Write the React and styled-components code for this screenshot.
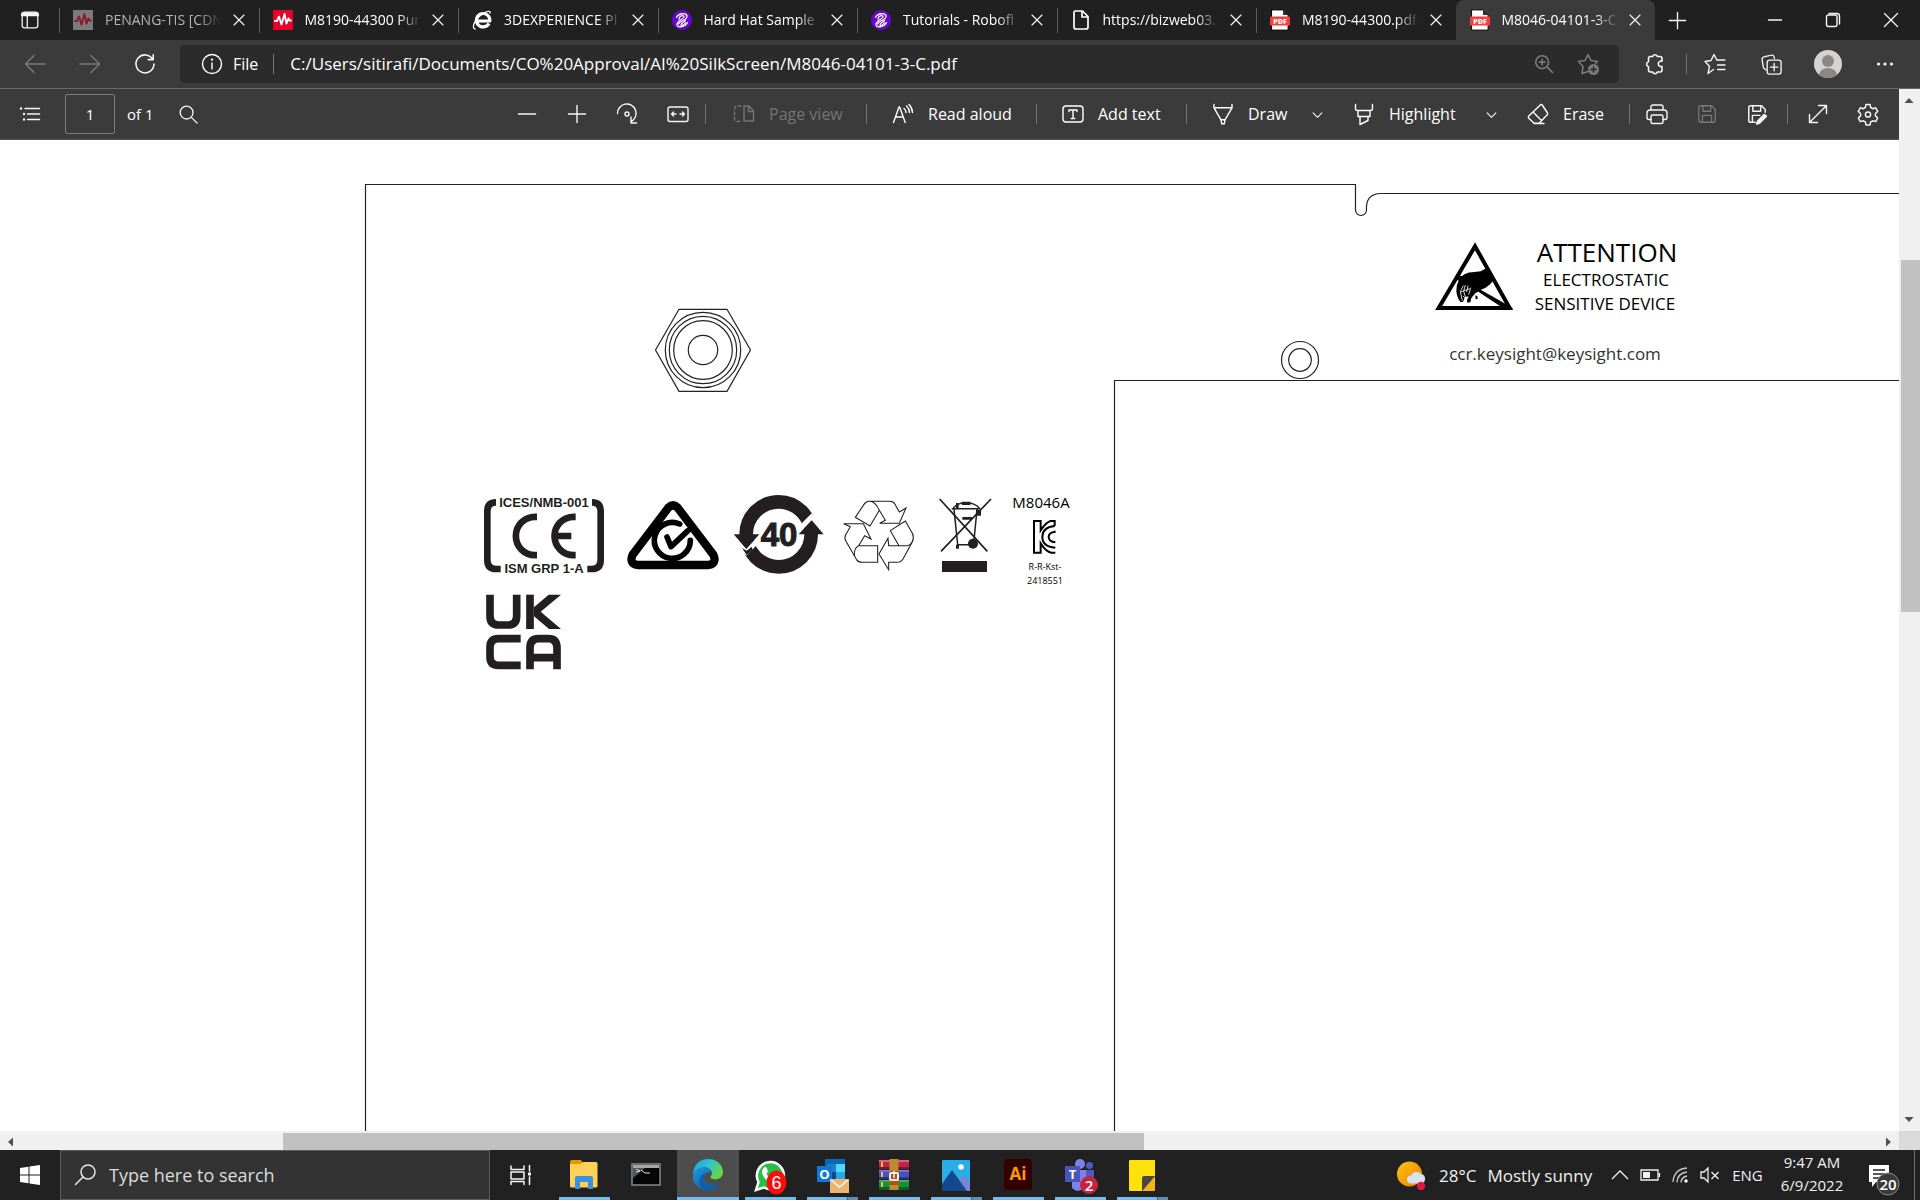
import React from "react";
import styled, { createGlobalStyle } from "styled-components";

const GlobalStyle = createGlobalStyle`
  * { box-sizing: border-box; }

  html, body, #root { height: 100%; }

  body {
    margin: 0;
    overflow: hidden;
    font-family: "Open Sans", "Noto Sans", sans-serif;
    color: #ffffff;
    background: #ffffff;
  }

  button, input {
    font: inherit;
    color: inherit;
  }
`;

/* ---------- icons ---------- */

const Glyph = styled.svg`
  display: block;
  flex: none;
  width: ${(p) => p.$size || 24}px;
  height: ${(p) => p.$size || 24}px;
  fill: none;
  stroke: currentColor;
  stroke-width: ${(p) => p.$weight || 1.4};
  stroke-linecap: round;
  stroke-linejoin: round;
  overflow: visible;
`;

const paths = {
  back: <path d="M22 12H2.500M11 3.500 2.500 12l8.500 8.500" />,
  forward: <path d="M2 12h19.500M13 3.500l8.500 8.500-8.500 8.500" />,
  reload: <path d="M20.500 7A9.800 9.800 0 1 0 21.800 12M21 2v5.200h-5.500" />,
  info: (
    <>
      <circle cx="12" cy="12" r="9.500" />
      <path d="M12 11v6" />
      <circle cx="12" cy="7.600" r=".5" fill="currentColor" />
    </>
  ),
  zoomIn: (
    <>
      <circle cx="10" cy="10" r="7" />
      <path d="m15.200 15.200 6 6M10 7v6M7 10h6" />
    </>
  ),
  starAdd: (
    <>
      <path d="M11 19.500 5 21.500l1-7L1.500 9.500l6.500-1L11 2.500l3 6 6.500 1-2 2" />
      <circle cx="16.500" cy="17.500" r="5.500" fill="currentColor" stroke="none" />
      <path d="M16.500 15v5M14 17.500h5" stroke="#2b2b2b" />
    </>
  ),
  puzzle: (
    <path d="M6.500 4.500h3.200a2.400 2.400 0 0 1 4.600 0H17a2 2 0 0 1 2 2v2.700a2.800 2.800 0 1 0 0 5.300V18a2 2 0 0 1-2 2h-2.700a2.400 2.400 0 0 1-4.600 0H7.500a2 2 0 0 1-2-2v-3.200a2.600 2.600 0 0 1 0-5V6.500a2 2 0 0 1 2-2Z" />
  ),
  starList: (
    <path d="M10.500 17.500 5 21.500l1.500-7.300L2 9.500l6-1 3-6 2.800 5.500H22M14.500 13H22M14.500 17.500H22" />
  ),
  collections: (
    <>
      <path d="M6.500 17.500 5 16.800a3 3 0 0 1-1.700-3L2.200 7a2.500 2.500 0 0 1 2-3l7.500-1.700A2.500 2.500 0 0 1 14.700 4l.3 1.500" />
      <rect x="7.500" y="7.500" width="14.500" height="14.500" rx="2.500" />
      <path d="M14.750 11v7.500M11 14.750h7.500" />
    </>
  ),
  more: (
    <g fill="currentColor" stroke="none">
      <circle cx="5.500" cy="12" r="1.600" />
      <circle cx="12" cy="12" r="1.600" />
      <circle cx="18.500" cy="12" r="1.600" />
    </g>
  ),
  contents: (
    <>
      <path d="M7 6.500h14.500M9.500 12h12M9.500 17.500h12" />
      <g fill="currentColor" stroke="none">
        <circle cx="3" cy="6.500" r="1.200" />
        <circle cx="6" cy="12" r="1.200" />
        <circle cx="6" cy="17.500" r="1.200" />
      </g>
    </>
  ),
  search: (
    <>
      <circle cx="10" cy="10" r="6.700" />
      <path d="m15 15 6 6" />
    </>
  ),
  minus: <path d="M3.500 12h17" />,
  plus: <path d="M3.500 12h17M12 3.500v17" />,
  rotate: (
    <>
      <path d="M2.500 11.500a9.300 9.300 0 1 1 14 7.800M16 15v6h5.500" />
      <circle cx="12" cy="12" r="2" />
    </>
  ),
  fit: (
    <>
      <rect x="2" y="5" width="20" height="14.500" rx="2" />
      <path d="M5.500 12h4.500M14 12h4.500M7.500 10l-2 2 2 2M16.500 10l2 2-2 2" />
    </>
  ),
  pageView: (
    <>
      <path d="M12 4h5l4.500 5v10h-9.500zM16.500 4v5.500h5" />
      <path d="M9 4H5a2.500 2.500 0 0 0-2.500 2.500V17A2.500 2.500 0 0 0 5 19.500h4" strokeDasharray="3 2.500" />
    </>
  ),
  readAloud: (
    <path d="M2.500 20.500 8 5h.6l5.600 15.500M4.500 15h7.800M13 6.500a5 5 0 0 1 2 4M15.500 4a9 9 0 0 1 3 6.500M18 2.500a12 12 0 0 1 3.500 8" />
  ),
  addText: (
    <>
      <rect x="2" y="4" width="20" height="16" rx="3" />
      <path d="M8 9.500V8h8v1.500M12 8v8.500M10.300 16.500h3.400" />
    </>
  ),
  pen: (
    <path d="M3 2.500v3.300M21 2.500v3.300M3 5.800h18l-7 12h-4zM10 17.800l.7 4h2.600l.7-4" />
  ),
  marker: (
    <path d="M3.500 2.500v4a2 2 0 0 0 2 2h13a2 2 0 0 0 2-2v-4M6 8.500v6h12v-6M8 14.500v8l8-4v-4" />
  ),
  erase: (
    <path d="M14.500 2.800 2.800 14a1.500 1.500 0 0 0 0 2.200l5.400 5h5l8-8.500a1.500 1.500 0 0 0 0-2.200l-5-7.500a1.200 1.200 0 0 0-1.700-.2ZM7 10l8.500 8.500M8 21.500h10" />
  ),
  chevron: <path d="m6.500 10 5.500 5.500 5.500-5.500" />,
  print: (
    <>
      <path d="M6 8V5a2 2 0 0 1 2-2h8a2 2 0 0 1 2 2v3M6 17.500H4A2 2 0 0 1 2 15.500V11a3 3 0 0 1 3-3h14a3 3 0 0 1 3 3v4.500a2 2 0 0 1-2 2h-2" />
      <rect x="6" y="13" width="12" height="8.500" rx="1.500" />
    </>
  ),
  save: (
    <path d="M5 3h12l4 4v12a2 2 0 0 1-2 2H5a2 2 0 0 1-2-2V5a2 2 0 0 1 2-2ZM7.500 3v6h8.500V3M7 21v-7.500h10V21" />
  ),
  saveAs: (
    <>
      <path d="M10 21H5a2 2 0 0 1-2-2V5a2 2 0 0 1 2-2h12l4 4v3M7.500 3v6h8.500V3M7 21v-7.500h8" />
      <path d="m20 13-7 7-1 2.500 2.700-1L21.800 14.500z" strokeWidth="2.500" />
    </>
  ),
  expand: <path d="M3.500 20.500 20.500 3.500M12.500 3.500h8v8M3.500 12.500v8h8" />,
  gear: (
    <>
      <path d="m10 2.500-.7 3a7 7 0 0 0-2 1.200l-3-.9-2 3.600 2.300 2.100a7 7 0 0 0 0 2.400l-2.300 2.100 2 3.600 3-.9a7 7 0 0 0 2 1.200l.7 3h4l.7-3a7 7 0 0 0 2-1.200l3 .9 2-3.600-2.300-2.100a7 7 0 0 0 0-2.400l2.300-2.100-2-3.600-3 .9a7 7 0 0 0-2-1.200l-.7-3z" />
      <circle cx="12" cy="12.500" r="2.600" />
    </>
  ),
  close: <path d="m6 6 12 12M18 6 6 18" />,
  minimize: <path d="M5.500 12h13" />,
  restore: (
    <>
      <rect x="5.500" y="7" width="10.500" height="11.500" rx="2" />
      <path d="M8 5.500h8a2.500 2.500 0 0 1 2.500 2.500v8" />
    </>
  ),
  tabMenu: (
    <>
      <rect x="3.500" y="3.500" width="17" height="17" rx="2.500" />
      <path d="M3.500 6.500h17M4 5h16" strokeWidth="3" />
      <path d="M9 8v12" />
    </>
  ),
};

const Icon = ({ name, size, weight }) => (
  <Glyph viewBox="0 0 24 24" $size={size} $weight={weight} aria-hidden="true">
    {paths[name]}
  </Glyph>
);

/* ---------- tab strip ---------- */

const Shell = styled.div`
  height: 100vh;
  display: flex;
  flex-direction: column;
  overflow: hidden;
`;

const TabStrip = styled.div`
  display: flex;
  flex: none;
  height: 40px;
  background: #202020;
`;

const IconButton = styled.button`
  display: flex;
  align-items: center;
  justify-content: center;
  flex: none;
  width: ${(p) => p.$width || 50}px;
  padding: 0;
  border: none;
  background: transparent;
  color: ${(p) => (p.$dim ? "#7a7a7a" : "#f5f5f5")};
`;

const Tabs = styled.div`
  display: flex;
  flex: 1;
  min-width: 0;
`;

const Tab = styled.div`
  display: flex;
  align-items: center;
  flex: 1;
  min-width: 0;
  padding: 0 12px 0 14px;
  border-radius: 8px 8px 0 0;
  background: ${(p) => (p.$active ? "#3b3b3b" : `linear-gradient(#5c5c5c, #5c5c5c) 0 8px / 1px 25px no-repeat`)};
`;

const TabTitle = styled.span`
  flex: 1;
  margin: 0 9px 0 12px;
  overflow: hidden;
  white-space: nowrap;
  font-size: 14px;
  line-height: 20px;
  color: ${(p) => (p.$dim ? "#b4b4b4" : "#ffffff")};
  mask-image: linear-gradient(to right, #000 80%, transparent);
`;

const TabSpacer = styled.div`
  width: 47px;
  flex: none;
`;

const Favicon = ({ kind }) => (
  <Glyph viewBox="0 0 20 20" $size={20} aria-hidden="true">
    {(kind === "wave" || kind === "waveDim") && (
      <>
        <rect width="20" height="20" stroke="none" fill={kind === "wave" ? "#e90029" : "#7b7b7b"} />
        <path
          d="M2 11h2l2-4.500 2.500 8L11.500 4l2 9.500 2-5 1 2H18"
          stroke={kind === "wave" ? "#ffffff" : "#8a1a2c"}
          strokeWidth="1.900"
        />
      </>
    )}
    {kind === "ie" && (
      <>
        <path d="M6 11h11.800A6.700 6.700 0 1 0 17 13.500" stroke="#ffffff" strokeWidth="3.200" strokeLinecap="butt" />
        <path d="M3 19C-1 18 3 9 9.500 4.500M18 3c1-2-2-2-5-.5" stroke="#ffffff" strokeWidth="1.300" />
      </>
    )}
    {kind === "roboflow" && (
      <>
        <circle cx="10" cy="10" r="10" fill="#6706ce" stroke="none" />
        <path
          d="M4.500 7.500C6 3.500 14 2 15 6c.8 4-7.500 4.500-8.500 8M7 9c0-3 4.500-4.500 5-2.500.5 2.500-8 4-7 8.500 1 3 8.500 2 10.500-2.500M13.500 10.500c-3 2-5.500 4-4 5 1.500.5 3-1.500 4-3"
          stroke="#ffffff"
          strokeWidth="1.300"
        />
      </>
    )}
    {kind === "file" && (
      <path d="M4.500 1h7l5.500 5.500V17a2 2 0 0 1-2 2H5a2 2 0 0 1-2-2V2.500A1.500 1.500 0 0 1 4.500 1ZM11 1v6h6" stroke="#ffffff" strokeWidth="1.700" />
    )}
    {kind === "pdf" && (
      <>
        <path d="M2 0h11l5 5v15H2z" fill="#ffffff" stroke="#000000" strokeWidth=".8" />
        <path d="M13 0v5h5z" fill="#333333" stroke="none" />
        <rect x="0" y="6.500" width="20" height="9" rx="1" fill="#f93f3f" stroke="none" />
        <text x="10" y="13.500" textAnchor="middle" fontSize="7" fontWeight="800" fill="#ffffff" stroke="none">
          PDF
        </text>
      </>
    )}
  </Glyph>
);

const tabs = [
  { id: 1, icon: "waveDim", title: "PENANG-TIS [CDN", dim: true },
  { id: 2, icon: "wave", title: "M8190-44300 Pur" },
  { id: 3, icon: "ie", title: "3DEXPERIENCE Pl" },
  { id: 4, icon: "roboflow", title: "Hard Hat Sample" },
  { id: 5, icon: "roboflow", title: "Tutorials - Robofl" },
  { id: 6, icon: "file", title: "https://bizweb03." },
  { id: 7, icon: "pdf", title: "M8190-44300.pdf" },
  { id: 8, icon: "pdf", title: "M8046-04101-3-C", active: true },
];

/* ---------- address bar ---------- */

const AddressRow = styled.div`
  display: flex;
  flex: none;
  height: 49px;
  padding: 0 7px;
  background: #3b3b3b;
  border-bottom: 1px solid #686868;
`;

const AddressBox = styled.div`
  display: flex;
  align-items: center;
  flex: 1;
  min-width: 0;
  margin: 5px 5px 5px 8px;
  padding: 0 8px 0 20px;
  border-radius: 5px;
  background: #2b2b2b;
`;

const Scheme = styled.span`
  margin-left: 9px;
  font-size: 16px;
`;

const Divider = styled.span`
  flex: none;
  align-self: center;
  width: 1px;
  height: 20px;
  margin: 0 ${(p) => p.$gap || 0}px;
  background: #757575;
`;

const AddressInput = styled.input`
  flex: 1;
  min-width: 0;
  padding: 0 0 2px 1px;
  border: none;
  outline: none;
  background: transparent;
  font-size: 17px;
`;

const Avatar = styled.svg`
  width: 28px;
  height: 28px;
`;

/* ---------- pdf viewer ---------- */

const Viewer = styled.main`
  display: flex;
  flex: 1;
  min-height: 0;
`;

const ViewerColumn = styled.div`
  display: flex;
  flex-direction: column;
  flex: 1;
  min-width: 0;
`;

const PdfBar = styled.div`
  display: flex;
  flex: none;
  height: 51px;
  padding-right: 6px;
  background: #3b3b3b;
  border-bottom: 1px solid #555555;
  font-size: 16px;
`;

const PageInput = styled.input`
  align-self: center;
  width: 50px;
  height: 40px;
  margin: 0 12px 0 5px;
  padding: 0;
  border: 1px solid #7d7d7d;
  border-radius: 2px;
  background: transparent;
  text-align: center;
  font-size: 15px;
`;

const PageCount = styled.span`
  align-self: center;
  width: 36px;
  font-size: 15px;
`;

const ToolGroup = styled.div`
  display: flex;
  margin-left: auto;
`;

const ToolButton = styled.button`
  display: flex;
  align-items: center;
  gap: 13px;
  flex: none;
  width: ${(p) => p.$width}px;
  padding: 0 0 0 ${(p) => (p.$tight ? 15 : 24)}px;
  border: none;
  background: transparent;
  white-space: nowrap;
  color: ${(p) => (p.$dim ? "#747474" : "#ffffff")};
`;

const Sheet = styled.svg`
  display: block;
  flex: 1;
  min-height: 0;
  width: 100%;
  background: #ffffff;
  fill: none;
  stroke: none;
`;

const Track = styled.div`
  display: flex;
  flex: none;
  flex-direction: ${(p) => (p.$vertical ? "column" : "row")};
  ${(p) => (p.$vertical ? "width: 21px; padding-left: 2px;" : "height: 19px; padding-top: 2px;")}
  background: #f0f0f0;
`;

const TrackGap = styled.div`
  flex: ${(p) => p.$grow} 0 0;
`;

const Thumb = styled.div`
  flex: ${(p) => p.$grow} 0 0;
  background: #c1c1c1;
`;

const Arrow = styled.svg`
  display: block;
  flex: none;
  width: 20px;
  height: 20px;
  fill: #505050;
`;

const Corner = styled.div`
  height: 19px;
  flex: none;
  margin-left: -2px;
  background: #dadada;
`;

const ink = "#231f20";

const PlateOutline = () => (
  <g stroke="#222222" strokeWidth="1.200">
    <path d="M365.500 2400V44.500H1355.500V70a5.500 5.500 0 0 0 11 0V66q1-12 14-12.500H3800" />
    <path d="M1114.500 2400V240.500H3800" />
    <circle cx="1300" cy="220" r="18.500" />
    <circle cx="1300" cy="220" r="11.300" />
    <path d="M655.500 210 679 169.300h48L750.500 210 727 251.300h-48z" />
    <circle cx="703" cy="210" r="37.700" />
    <circle cx="703" cy="210" r="33.700" />
    <circle cx="703" cy="210" r="29.300" />
    <circle cx="703" cy="210" r="14.700" />
  </g>
);

const EsdWarning = () => (
  <g>
    <g transform="translate(1260 30) scale(.33333)">
      <path d="M645 229 536 414H749Z" stroke="#000000" strokeWidth="12" />
      <path
        fill="#000000"
        d="M590 313 606 319Q617 308 636 307L662 304 684 292 704 325 692 341Q678 355 662 359L757 413V420H738L655 365Q646 366 642 374L634 384 631 397 622 398 621 390 626 379 615 381 609 396 602 396Q590 382 589 362 588 345 596 332L584 325ZM646 376 652 379 653 387 647 388Z"
      />
      <path stroke="#ffffff" strokeWidth="2.500" d="M610 347 601 365 607 392M616 345 611 364 616 380M624 347 620 366M632 353 626 374M603 366 629 356M609 378 616 384" />
    </g>
    <g fill="#000000" textAnchor="middle" fontFamily='"Open Sans", sans-serif'>
      <text x="1607" y="122" fontSize="26">ATTENTION</text>
      <text x="1606" y="146" fontSize="17">ELECTROSTATIC</text>
      <text x="1605" y="170" fontSize="17">SENSITIVE DEVICE</text>
      <text x="1555" y="220" fontSize="17" fill="#333333">ccr.keysight@keysight.com</text>
    </g>
  </g>
);

const CeMark = () => (
  <g>
    <g transform="translate(470 340) scale(.33333)" stroke={ink} strokeWidth="20">
      <path d="M78 67Q52 67 52 94V240Q52 267 78 267H92M366 67Q392 67 392 94V240Q392 267 366 267H352" />
      <path d="M201 110.500H195a57.500 57.500 0 0 0 0 115H201M317 110.500H311a57.500 57.500 0 0 0 0 115H317M262 168H304" />
    </g>
    <g fill={ink} textAnchor="middle" fontFamily='"Liberation Sans", Arial, sans-serif' fontSize="13" fontWeight="700">
      <text x="544" y="367">ICES/NMB-001</text>
      <text x="544" y="433">ISM GRP 1-A</text>
    </g>
  </g>
);

const RcmMark = () => (
  <g transform="translate(470 340) scale(.33333)" stroke="#000000" strokeLinecap="round">
    <path d="M596 82Q609 70 622 82L730 224Q742 250 715 255H503Q476 250 488 224Z" strokeWidth="25" />
    <path d="M629 132A54 54 0 1 0 661 181" strokeWidth="17" />
    <path d="M591 171 603 200 654 152" strokeWidth="17" strokeLinejoin="round" />
  </g>
);

const FortyMark = () => (
  <g>
    <g transform="translate(470 340) scale(.33333)">
      <circle cx="926" cy="163" r="97.500" stroke={ink} strokeWidth="41" />
      <path d="M785 169 829 216 878 166" stroke="#ffffff" strokeWidth="16" />
      <path d="M1067 157 1025 111 976 160" stroke="#ffffff" strokeWidth="16" />
      <path d="M816 204 830 212 845 200 848 210 830 225Z" fill={ink} />
      <path d="M791 163H868L829 207Z" fill={ink} />
      <path d="M1061 163H986L1025 121Z" fill={ink} />
    </g>
    <text
      x="779"
      y="406"
      textAnchor="middle"
      fill={ink}
      stroke={ink}
      strokeWidth="1"
      fontFamily='"Liberation Sans", Arial, sans-serif'
      fontSize="33"
      fontWeight="700"
    >
      40
    </text>
  </g>
);

const RecycleMark = () => (
  <g transform="translate(800 340) scale(.33333)" stroke={ink} strokeWidth="3.200">
    <path d="M166 112 192 73Q198 64 208 64H270Q280 64 285 73L298 96 318 84 298 130H239L256 121 238 91 210 138ZM212 64Q228 68 238 91" />
    <path d="M271 152 316 123 337 160Q343 172 338 184L309 237Q303 247 292 247H266V269L237 222 264 175 266 197H297ZM297 197H322Q336 195 340 174" />
    <path d="M233 197V247H186Q175 247 169 238L138 184Q132 173 137 164L151 140 131 131H190L213 177 194 167 176 197ZM176 197Q160 205 164 228" />
  </g>
);

const WeeeMark = () => (
  <g transform="translate(800 340) scale(.33333)" stroke={ink} strokeWidth="5">
    <path d="M419 57 562 214M573 57 423 214" />
    <path d="M462 88 473 194H512M531 88 522 180M455 86H541M460 84Q472 68 498 68T538 84" strokeWidth="4.500" />
    <g fill={ink} stroke="none">
      <path d="M486 65H511V75H486zM528 90H543V107H528zM487 111H516V119H487zM468 194H477V206H468zM468 69H476V86H468z" />
      <circle cx="519" cy="191" r="15" />
      <path d="M426 243H561V276H426z" />
    </g>
  </g>
);

const KcMark = () => (
  <g>
    <g transform="translate(800 340) scale(.33333)" stroke="#000000" strokeWidth="6">
      <path d="M764 138V123H752Q740 125 722 151V123H702V218H722V190Q738 216 754 218H766" />
      <path d="M764 138Q727 142 727 171T766 203" />
      <path d="M766 155Q746 157 746 171T766 187M764 152V158" />
    </g>
    <g fill="#000000" textAnchor="middle" fontFamily='"Open Sans", sans-serif'>
      <text x="1041" y="368" fontSize="15">M8046A</text>
      <g fontSize="9">
        <text x="1045" y="430">R-R-Kst-</text>
        <text x="1045" y="444">2418551</text>
      </g>
    </g>
  </g>
);

const UkcaMark = () => (
  <g transform="translate(470 340) scale(.33333)" stroke={ink} strokeWidth="23">
    <path d="M60 344V408Q60 435 86 435H114Q140 435 140 408V344" />
    <path d="M180 344V447" />
    <path d="M192 382 236 344H273L212 395 273 447H237L192 409Z" fill={ink} stroke="none" />
    <path d="M152 476H86Q60 476 60 502V530Q60 556 86 556H152" />
    <path d="M180 568V504Q180 476 206 476H235Q261 476 261 504V568M180 533H261" />
  </g>
);

/* ---------- taskbar ---------- */

const Taskbar = styled.footer`
  display: flex;
  flex: none;
  height: 50px;
  background: #212121;
`;

const SearchBox = styled.label`
  display: flex;
  align-items: center;
  flex: none;
  width: 430px;
  padding-left: 13px;
  border: 1px solid #5c5c5c;
  background: #333333;
  color: #e6e6e6;

  input {
    flex: 1;
    min-width: 0;
    padding: 0;
    margin-left: 11px;
    border: none;
    outline: none;
    background: transparent;
    font-size: 18px;
  }

  input::placeholder {
    color: #dcdcdc;
    opacity: 1;
  }
`;

const AppButton = styled.button`
  display: flex;
  align-items: center;
  justify-content: center;
  flex: none;
  width: 62px;
  padding: 0;
  border: none;
  background-color: ${(p) => (p.$focused ? "#4d4d4d" : "transparent")};
  background-image: ${(p) => {
    if (!p.$running) return "none";
    return p.$stacked
      ? "linear-gradient(to right, #76b9ed 40px, #41617b 40px, #41617b 41px, #5c8fb8 41px)"
      : "linear-gradient(#76b9ed, #76b9ed)";
  }};
  background-repeat: no-repeat;
  background-position: center bottom;
  background-size: ${(p) => (p.$focused ? 62 : 51)}px 3px;
`;

const AppArt = styled.svg`
  display: block;
  width: 34px;
  height: 34px;
  overflow: visible;
`;

const Tray = styled.div`
  display: flex;
  align-items: center;
  margin-left: auto;
  color: #f0f0f0;
`;

const Weather = styled.button`
  display: flex;
  align-items: center;
  gap: 11px;
  width: 211px;
  padding: 0;
  border: none;
  background: transparent;
  font-size: 17px;
  white-space: nowrap;
`;

const TrayIcon = styled.svg`
  display: block;
  flex: none;
  width: 30px;
  height: 24px;
  fill: none;
  stroke: #f0f0f0;
  stroke-width: 1.300;
`;

const Language = styled.span`
  width: 45px;
  text-align: center;
  font-size: 15px;
`;

const Clock = styled.div`
  width: 80px;
  padding: 0 0 2px 4px;
  text-align: center;
  font-size: 15px;
  line-height: 23px;
`;

const Notices = styled.svg`
  display: block;
  width: 60px;
  height: 50px;
  margin-left: 4px;
`;

const ShowDesktop = styled.div`
  width: 6px;
  height: 50px;
  border-left: 1px solid #6d6d6d;
`;

const appArt = {
  explorer: (
    <>
      <path d="M3 4a2 2 0 0 1 2-2h9l2 3v8H3z" fill="#e09a00" />
      <path d="M3 6h11l2-2h13a1.500 1.500 0 0 1 1.500 1.500V28A1.500 1.500 0 0 1 29 29.500H4.500A1.500 1.500 0 0 1 3 28z" fill="#ffd257" />
      <path d="M8 31V20a2 2 0 0 1 2-2h14a2 2 0 0 1 2 2v11h-5v-7h-8v7z" fill="#3a92dc" />
    </>
  ),
  terminal: (
    <>
      <rect x="3" y="6" width="28" height="21" fill="#050505" stroke="#85898f" strokeWidth="1.500" />
      <path d="M4 7h26v3H4z" fill="#a6a6a6" />
      <path d="M4 10h12L4 20z" fill="#555555" />
      <path d="m7 11 4 2-4 1M12 12l4 3h5" stroke="#dddddd" fill="none" />
    </>
  ),
  edge: (
    <>
      <defs>
        <linearGradient id="edgeTop" x1="0" x2="1" y1="0" y2=".5">
          <stop offset="0" stopColor="#1fa0e0" />
          <stop offset=".5" stopColor="#2cc3d2" />
          <stop offset="1" stopColor="#65d846" />
        </linearGradient>
        <linearGradient id="edgeBody" x1="0" x2="1" y1="0" y2="1">
          <stop offset="0" stopColor="#1b9de2" />
          <stop offset="1" stopColor="#114a8b" />
        </linearGradient>
      </defs>
      <path d="M2 16C3 6 9 1 17 1c9 0 15 6 15 13 0 6-5 8-10 7-3-.5-3-2-2-3 3-4-1-8-6-8C8 10 4 12 2 16Z" fill="url(#edgeTop)" />
      <path d="M2 17c1-5 6-8 11-8 4 0 7 2 7 6-3-2-8 1-7 6 1 6 9 8 16 4-3 6-9 8-14 7C7 31 1 25 2 17Z" fill="url(#edgeBody)" />
      <path d="M13 20c-1 9 9 12 16 5-3 6-9 8-14 7-5-1-9-8-5-14 1-2 4-3 6-2-2 1-3 2-3 4Z" fill="#0f5fae" />
    </>
  ),
  whatsapp: (
    <>
      <path d="M3 32 5.500 24A13.500 13.500 0 1 1 11 29.500Z" fill="#25c045" stroke="#ffffff" strokeWidth="2.500" />
      <path d="M11 9.500c1-1 3-.5 3 1l1 3-1.500 2c1 3 3 5 6 6l2-2 3 1.500c1 1 0 4-3 4.500-6 0-13-7-12.500-12 0-2 1-3 2-4Z" fill="#ffffff" />
      <ellipse cx="23.500" cy="24.500" rx="10" ry="12" fill="#fb0d0d" />
      <text x="23.500" y="31" textAnchor="middle" fontFamily="Liberation Sans" fontSize="18" fill="#ffffff">6</text>
    </>
  ),
  outlook: (
    <>
      <path d="M10 1h20v22H10z" fill="#1066b5" />
      <path d="M12 6h9v8h-9z" fill="#1a80cf" />
      <path d="M21 6h9v8h-9z" fill="#50d9ff" />
      <path d="M12 14h9v8h-9z" fill="#0a4a8b" />
      <path d="M21 14h9v8h-9z" fill="#28a8ea" />
      <path d="M2 8h15v16H2z" fill="#0f78d4" />
      <text x="9.500" y="21" textAnchor="middle" fontSize="13" fontWeight="700" fill="#ffffff">O</text>
      <path d="M15 21h19v14H15z" fill="#eeb371" />
      <path d="m16 22 8.500 7 8.500-7" fill="none" stroke="#ffffff" strokeWidth="1.500" />
    </>
  ),
  archive: (
    <>
      <path d="M2 2h30v9H2z" fill="#c32344" />
      <path d="M2 12h30v9H2z" fill="#4b4fc4" />
      <path d="M2 22h30v10H2z" fill="#16913a" />
      <path d="M2 2h30v2H2zM2 12h30v1.500H2zM2 22h30v1.500H2z" fill="#ffffff" opacity=".3" />
      <path d="M2 9h30v2H2zM2 19h30v2H2zM2 29h30v3H2z" fill="#000000" opacity=".35" />
      <path d="M4 4h2v5H4zM4 14h2v5H4zM4 24h2v5H4z" fill="#e6c35b" />
      <path d="M12.500 1h9v31h-9z" fill="#bd8a33" />
      <path d="M12.500 13h9v14h-9z" fill="#a8550f" />
      <rect x="13" y="15" width="8" height="7" rx="1" fill="none" stroke="#eeeeee" strokeWidth="2" />
      <path d="M17 13v7" stroke="#eeeeee" strokeWidth="1.500" />
    </>
  ),
  photos: (
    <>
      <rect x="3" y="2" width="28" height="31" rx="1" fill="#29aeea" />
      <path d="m17 24 8-7 6 7v9H17z" fill="#7986d8" />
      <path d="M3 26 13 12l15 21H3z" fill="#134a8e" />
      <circle cx="22" cy="9" r="2.800" fill="#ffffff" />
    </>
  ),
  illustrator: (
    <>
      <rect x="3" y="1" width="28" height="31" rx="4" fill="#330000" />
      <text x="17" y="22" textAnchor="middle" fontSize="17" fontWeight="700" fill="#ff9a00">Ai</text>
    </>
  ),
  teams: (
    <>
      <circle cx="17" cy="6" r="5" fill="#7b83eb" />
      <circle cx="26.500" cy="7.500" r="3.500" fill="#5059c9" />
      <path d="M21 12h10v10a6 6 0 0 1-10 4z" fill="#5059c9" />
      <path d="M9 12h14v12a8 8 0 0 1-14 6z" fill="#7b83eb" />
      <path d="M2 8h15v16H2z" fill="#4b53bc" />
      <text x="9.500" y="21" textAnchor="middle" fontSize="13" fontWeight="700" fill="#ffffff">T</text>
      <circle cx="26" cy="27" r="9" fill="#c4253b" />
      <text x="26" y="33" textAnchor="middle" fontSize="15" fontWeight="600" fill="#ffffff">2</text>
    </>
  ),
  notes: (
    <>
      <path d="M4 3a1 1 0 0 1 1-1h25v16L17 33H5a1 1 0 0 1-1-1z" fill="#ffe20c" />
      <path d="M17 33 30 18v14a1 1 0 0 1-1 1z" fill="#f0b51c" />
      <path d="M17 33V20a2 2 0 0 1 2-2h11z" fill="#474747" />
    </>
  ),
};

const apps = [
  { id: "explorer", label: "File Explorer", running: true },
  { id: "terminal", label: "Command Prompt" },
  { id: "edge", label: "Microsoft Edge", running: true, focused: true },
  { id: "whatsapp", label: "WhatsApp", running: true },
  { id: "outlook", label: "Outlook", running: true, stacked: true },
  { id: "archive", label: "WinRAR", running: true },
  { id: "photos", label: "Photos", running: true, stacked: true },
  { id: "illustrator", label: "Illustrator", running: true },
  { id: "teams", label: "Teams", running: true },
  { id: "notes", label: "Sticky Notes", running: true, stacked: true },
];

const BrowserTabs = () => (
  <TabStrip>
    <IconButton $width={59} aria-label="Tab actions"><Icon name="tabMenu" size={22} /></IconButton>
    <Tabs>
      {tabs.map((tab) => (
        <Tab key={tab.id} $active={tab.active}>
          <Favicon kind={tab.icon} />
          <TabTitle $dim={tab.dim}>{tab.title}</TabTitle>
          <IconButton $width={16} aria-label="Close tab"><Icon name="close" size={20} /></IconButton>
        </Tab>
      ))}
    </Tabs>
    <IconButton $width={44} aria-label="New tab"><Icon name="plus" size={23} /></IconButton>
    <TabSpacer />
    <IconButton $width={58} aria-label="Minimize"><Icon name="minimize" /></IconButton>
    <IconButton $width={57} aria-label="Restore"><Icon name="restore" /></IconButton>
    <IconButton $width={59} aria-label="Close"><Icon name="close" size={26} weight={1.2} /></IconButton>
  </TabStrip>
);

const AddressBar = () => (
  <AddressRow>
    <IconButton $width={55} $dim aria-label="Back"><Icon name="back" /></IconButton>
    <IconButton $width={55} $dim aria-label="Forward"><Icon name="forward" /></IconButton>
    <IconButton $width={55} aria-label="Refresh"><Icon name="reload" size={22} weight={1.7} /></IconButton>
    <AddressBox>
      <Icon name="info" />
      <Scheme>File</Scheme>
      <Divider $gap={15} />
      <AddressInput
        aria-label="Address"
        defaultValue="C:/Users/sitirafi/Documents/CO%20Approval/AI%20SilkScreen/M8046-04101-3-C.pdf"
      />
      <IconButton $width={45} $dim aria-label="Zoom"><Icon name="zoomIn" size={22} weight={1.8} /></IconButton>
      <IconButton $width={45} $dim aria-label="Add to favorites"><Icon name="starAdd" weight={1.6} /></IconButton>
    </AddressBox>
    <IconButton $width={62} aria-label="Extensions"><Icon name="puzzle" weight={1.6} /></IconButton>
    <Divider />
    <IconButton $width={56} aria-label="Favorites"><Icon name="starList" /></IconButton>
    <IconButton $width={56} aria-label="Collections"><Icon name="collections" size={23} /></IconButton>
    <IconButton $width={58} aria-label="Profile">
      <Avatar viewBox="0 0 28 28" aria-hidden="true">
        <clipPath id="face"><circle cx="14" cy="14" r="14" /></clipPath>
        <g clipPath="url(#face)">
          <rect width="28" height="28" fill="#d5d2cf" />
          <circle cx="14" cy="11" r="6" fill="#8c8784" />
          <ellipse cx="14" cy="25" rx="9" ry="7" fill="#8c8784" />
        </g>
      </Avatar>
    </IconButton>
    <IconButton $width={56} aria-label="Settings and more"><Icon name="more" /></IconButton>
  </AddressRow>
);

const PdfToolbar = () => (
  <PdfBar>
    <IconButton $width={60} aria-label="Table of contents"><Icon name="contents" /></IconButton>
    <PageInput aria-label="Page number" defaultValue="1" />
    <PageCount>of 1</PageCount>
    <IconButton aria-label="Search"><Icon name="search" size={23} /></IconButton>
    <ToolGroup>
      <IconButton aria-label="Zoom out"><Icon name="minus" /></IconButton>
      <IconButton aria-label="Zoom in"><Icon name="plus" /></IconButton>
      <IconButton aria-label="Rotate"><Icon name="rotate" /></IconButton>
      <IconButton $width={51} aria-label="Fit to width"><Icon name="fit" /></IconButton>
      <Divider $gap={2} />
      <ToolButton $width={158} $dim><Icon name="pageView" />Page view</ToolButton>
      <Divider />
      <ToolButton $width={169}><Icon name="readAloud" />Read aloud</ToolButton>
      <Divider />
      <ToolButton $width={149}><Icon name="addText" />Add text</ToolButton>
      <Divider />
      <ToolButton $width={110}><Icon name="pen" />Draw</ToolButton>
      <IconButton $width={40} aria-label="Draw options"><Icon name="chevron" size={19} /></IconButton>
      <ToolButton $width={134} $tight><Icon name="marker" />Highlight</ToolButton>
      <IconButton $width={40} aria-label="Highlight options"><Icon name="chevron" size={19} /></IconButton>
      <ToolButton $width={116} $tight><Icon name="erase" />Erase</ToolButton>
      <Divider $gap={2} />
      <IconButton aria-label="Print"><Icon name="print" /></IconButton>
      <IconButton $dim aria-label="Save"><Icon name="save" size={22} /></IconButton>
      <IconButton aria-label="Save as"><Icon name="saveAs" size={22} weight={1.6} /></IconButton>
      <Divider $gap={5} />
      <IconButton aria-label="Full screen"><Icon name="expand" /></IconButton>
      <IconButton aria-label="Settings"><Icon name="gear" weight={1.5} /></IconButton>
    </ToolGroup>
  </PdfBar>
);

const Drawing = () => (
  <Sheet role="img" aria-label="Silk screen drawing">
    <PlateOutline />
    <EsdWarning />
    <CeMark />
    <RcmMark />
    <FortyMark />
    <RecycleMark />
    <WeeeMark />
    <KcMark />
    <UkcaMark />
  </Sheet>
);

const SystemTray = () => (
  <Tray>
    <Weather>
      <AppArt viewBox="0 0 34 34" aria-hidden="true">
        <defs>
          <linearGradient id="sun" x1="0" x2="1" y1="0" y2="1">
            <stop offset="0" stopColor="#fdc60b" />
            <stop offset="1" stopColor="#f07c0a" />
          </linearGradient>
        </defs>
        <circle cx="15.500" cy="16" r="12.500" fill="url(#sun)" />
        <path d="M17 25.500a4 4 0 0 1 0-8 6 6 0 0 1 10-1.500 4.800 4.800 0 0 1 0 9.500z" fill="#d4e2f4" />
        <circle cx="27" cy="28" r="4.200" fill="#e2183d" />
      </AppArt>
      <span>28°C</span>
      <span>Mostly sunny</span>
    </Weather>
    <TrayIcon viewBox="0 0 30 24" aria-label="Show hidden icons"><path d="m7 16 8-8 8 8" /></TrayIcon>
    <TrayIcon viewBox="0 0 30 24" aria-label="Battery">
      <path d="M6 7h17v10H6zM24.500 10v4" />
      <path d="M8 9h7v6H8z" fill="#f0f0f0" stroke="none" />
    </TrayIcon>
    <TrayIcon viewBox="0 0 30 24" aria-label="Network">
      <path d="M8 19Q9 6 22 5M12 19.500Q12.500 10 22 9M16 19.500Q16.500 14 22 13" opacity=".8" />
      <circle cx="21" cy="18" r="1.800" fill="#f0f0f0" stroke="none" />
    </TrayIcon>
    <TrayIcon viewBox="0 0 30 24" aria-label="Muted"><path d="M6 9h3l4-4v14l-4-4H6zM16.500 9l7 7M23.500 9l-7 7" /></TrayIcon>
    <Language>ENG</Language>
    <Clock>
      <div>9:47 AM</div>
      <div>6/9/2022</div>
    </Clock>
    <Notices viewBox="0 0 60 50" aria-label="Notifications">
      <path d="M15 15h20v17H22l-4 5v-5h-3z" fill="#ffffff" />
      <path d="M19 20h12M19 24h12M19 28h7" stroke="#212121" strokeWidth="1.300" />
      <circle cx="34" cy="34" r="11" fill="#3a3a3a" stroke="#8a8a8a" />
      <text x="34" y="40" textAnchor="middle" fontSize="15" fontWeight="600" fill="#ffffff">20</text>
    </Notices>
    <ShowDesktop />
  </Tray>
);

export default function App() {
  return (
    <>
      <GlobalStyle />
      <Shell>
        <BrowserTabs />
        <AddressBar />
        <Viewer>
          <ViewerColumn>
            <PdfToolbar />
            <Drawing />
            <Track>
              <Arrow viewBox="0 0 20 20"><path d="M13 4.500v9L8 9z" /></Arrow>
              <TrackGap $grow={263} />
              <Thumb $grow={861} />
              <TrackGap $grow={735} />
              <Arrow viewBox="0 0 20 20"><path d="M7 4.500v9L12 9z" /></Arrow>
            </Track>
          </ViewerColumn>
          <Track $vertical>
            <Arrow viewBox="0 0 20 20"><path d="M3.500 14h9L8 9z" /></Arrow>
            <TrackGap $grow={151} />
            <Thumb $grow={352} />
            <TrackGap $grow={499} />
            <Arrow viewBox="0 0 20 20"><path d="M3.500 6h9L8 11z" /></Arrow>
            <Corner />
          </Track>
        </Viewer>
        <Taskbar>
          <IconButton $width={60} aria-label="Start">
            <Glyph viewBox="0 0 20 20" $size={20}>
              <path d="M0 3 8.500 1.700V9.500H0zM9.500 1.500 20 0v9.500H9.500zM0 10.500h8.500v7.800L0 17zM9.500 10.500H20V20L9.500 18.500z" fill="#ffffff" stroke="none" />
            </Glyph>
          </IconButton>
          <SearchBox>
            <Glyph viewBox="0 0 24 24" $weight={1.5}>
              <circle cx="14" cy="9" r="7" />
              <path d="m9 14-7.500 7.500" />
            </Glyph>
            <input type="text" placeholder="Type here to search" aria-label="Search" />
          </SearchBox>
          <IconButton $width={63} aria-label="Task view">
            <Glyph viewBox="0 0 24 24" $weight={1.5}>
              <path d="M1 3v3.500h13V3M1 9h13v7H1zM1 21.500V18.500h13v3M19.500 2.500V8M19.500 14v7.500" />
              <path d="M18 9.500h3v3h-3z" fill="currentColor" stroke="none" />
            </Glyph>
          </IconButton>
          {apps.map((app) => (
            <AppButton key={app.id} aria-label={app.label} $running={app.running} $focused={app.focused} $stacked={app.stacked}>
              <AppArt viewBox="0 0 34 34" aria-hidden="true">{appArt[app.id]}</AppArt>
            </AppButton>
          ))}
          <SystemTray />
        </Taskbar>
      </Shell>
    </>
  );
}
